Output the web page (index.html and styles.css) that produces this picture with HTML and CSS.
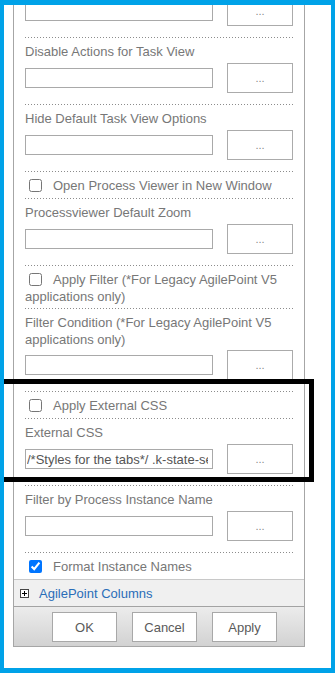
FILE: index.html
```html
<!DOCTYPE html>
<html>
<head>
<meta charset="utf-8">
<title>Settings</title>
<link rel="stylesheet" href="styles.css">
</head>
<body>
<div class="frame">
  <div class="panel">
    <div class="panel-body">
      <div class="field first">
        <div class="input-row">
          <input class="text-input" type="text">
          <button class="ellipsis" type="button">...</button>
        </div>
      </div>
      <div class="field">
        <div class="label">Disable Actions for Task View</div>
        <div class="input-row">
          <input class="text-input" type="text">
          <button class="ellipsis" type="button">...</button>
        </div>
      </div>
      <div class="field">
        <div class="label">Hide Default Task View Options</div>
        <div class="input-row">
          <input class="text-input" type="text">
          <button class="ellipsis" type="button">...</button>
        </div>
      </div>
      <div class="check-row">
        <label><input class="check" type="checkbox">Open Process Viewer in New Window</label>
      </div>
      <div class="field">
        <div class="label">Processviewer Default Zoom</div>
        <div class="input-row">
          <input class="text-input" type="text">
          <button class="ellipsis" type="button">...</button>
        </div>
      </div>
      <div class="check-row two-line">
        <label><input class="check" type="checkbox">Apply Filter (*For Legacy AgilePoint V5 applications only)</label>
      </div>
      <div class="field two-line">
        <div class="label">Filter Condition (*For Legacy AgilePoint V5 applications only)</div>
        <div class="input-row">
          <input class="text-input" type="text">
          <button class="ellipsis" type="button">...</button>
        </div>
      </div>
      <div class="check-row">
        <label><input class="check" type="checkbox">Apply External CSS</label>
      </div>
      <div class="field">
        <div class="label">External CSS</div>
        <div class="input-row">
          <input class="text-input" type="text" value="/*Styles for the tabs*/ .k-state-selected { }">
          <button class="ellipsis" type="button">...</button>
        </div>
      </div>
      <div class="field">
        <div class="label">Filter by Process Instance Name</div>
        <div class="input-row">
          <input class="text-input" type="text">
          <button class="ellipsis" type="button">...</button>
        </div>
      </div>
      <div class="check-row">
        <label><input class="check" type="checkbox" checked>Format Instance Names</label>
      </div>
    </div>
    <div class="section-header">
      <svg class="expander" width="9" height="9" viewBox="0 0 9 9" aria-hidden="true">
        <rect x="0.5" y="0.5" width="8" height="8" fill="#fff" stroke="#444"/>
        <path d="M2 4.5H7M4.5 2V7" stroke="#000" stroke-width="1"/>
      </svg>
      <span class="section-title">AgilePoint Columns</span>
    </div>
    <div class="footer">
      <button class="footer-btn" type="button">OK</button>
      <button class="footer-btn" type="button">Cancel</button>
      <button class="footer-btn" type="button">Apply</button>
    </div>
  </div>
  <div class="annotation"></div>
</div>
</body>
</html>
```

FILE: styles.css
```css
html, body {
  margin: 0;
  padding: 0;
}

body {
  font-family: "Liberation Sans", Arial, sans-serif;
  font-size: 13px;
  background: #fff;
}

.frame {
  position: relative;
  box-sizing: border-box;
  width: 335px;
  height: 673px;
  border-style: solid;
  border-color: #00a2e8;
  border-width: 5px 4px 5px 4px;
  overflow: hidden;
  background: #fff;
}

.panel {
  box-sizing: border-box;
  width: 292px;
  margin: -9px 0 0 9px;
  border: 1px solid #a6a6a6;
  border-top: none;
  background: #fff;
}

.panel-body {
  padding: 0 11px;
}

.field,
.check-row {
  background-image: linear-gradient(to right, #8c8c8c 1px, transparent 1px);
  background-size: 3px 1px;
  background-repeat: repeat-x;
  background-position: 0 0;
}

.field {
  padding: 6px 0 11px;
}

.field.first {
  padding-top: 0;
  background-image: none;
}

.label {
  line-height: 17px;
  color: #777;
  margin-bottom: 3px;
}

.field.two-line .label {
  margin-bottom: 2px;
}

.input-row {
  display: flex;
  align-items: center;
  gap: 14px;
}

.text-input {
  box-sizing: border-box;
  width: 188px;
  height: 20px;
  margin: 0;
  padding: 0 4px 0 1px;
  border: 1px solid #a9a9a9;
  border-radius: 0;
  background: #fff;
  font-family: "Liberation Sans", Arial, sans-serif;
  font-size: 13px;
  color: #555;
  outline: none;
}

.ellipsis {
  box-sizing: border-box;
  width: 66px;
  height: 30px;
  margin: 0;
  padding: 0;
  border: 1px solid #ababab;
  border-radius: 0;
  background: #fff;
  font-family: "Liberation Sans", Arial, sans-serif;
  font-size: 11px;
  color: #888;
}

.check-row {
  padding: 6px 0 4px;
  line-height: 17px;
  color: #777;
}

.check-row.two-line {
  padding-bottom: 3px;
}

.check {
  width: 13px;
  height: 13px;
  margin: 0 11px 0 4px;
  vertical-align: -2px;
}

.section-header {
  display: flex;
  align-items: center;
  gap: 10px;
  padding: 5px 0 4px 6px;
  border-top: 1px solid #c8c8c8;
  background: #f0f0f0;
  line-height: 17px;
}

.expander {
  display: block;
  flex: none;
}

.section-title {
  color: #2a6db8;
}

.footer {
  display: flex;
  gap: 15px;
  padding: 5px 0 4px 38px;
  border-top: 1px solid #a3a3a3;
  background: linear-gradient(#ececec, #d2d2d2);
}

.footer-btn {
  box-sizing: border-box;
  width: 65px;
  height: 30px;
  margin: 0;
  padding: 0;
  border: 1px solid #a8a8a8;
  border-radius: 0;
  background: #fff;
  font-family: "Liberation Sans", Arial, sans-serif;
  font-size: 13px;
  color: #5a5a5a;
}

.annotation {
  position: absolute;
  top: 374px;
  left: -20px;
  width: 330px;
  height: 103px;
  box-sizing: border-box;
  border: 5px solid #000;
  pointer-events: none;
}
```
